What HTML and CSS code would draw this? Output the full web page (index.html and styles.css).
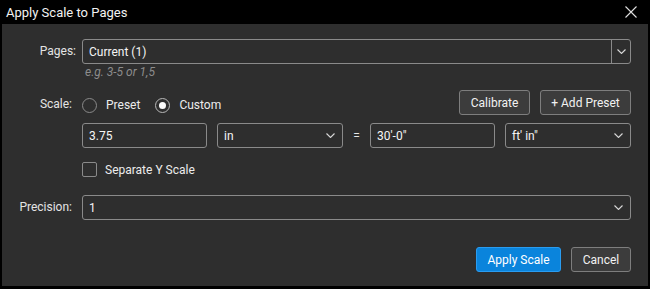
FILE: index.html
```html
<!DOCTYPE html>
<html>
<head>
<meta charset="utf-8">
<link rel="stylesheet" href="styles.css">
</head>
<body>
<div class="window">
  <div class="titlebar">
    <span class="title">Apply Scale to Pages</span>
    <svg class="close" width="12" height="12" viewBox="0 0 12 12"><path d="M0.5 0.5 L11.5 11.5 M11.5 0.5 L0.5 11.5" stroke="#e0e0e0" stroke-width="1.1" fill="none"/></svg>
  </div>
  <div class="panel">
    <div class="row row-pages">
      <div class="label">Pages:</div>
      <div class="control">
        <div class="field combo">
          <span class="value">Current (1)</span>
          <span class="combo-btn"><svg width="9" height="5" viewBox="0 0 9 5"><path d="M0.5 0.5 L4.5 4.5 L8.5 0.5" stroke="#d8d8d8" stroke-width="1.1" fill="none"/></svg></span>
        </div>
        <div class="hint">e.g. 3-5 or 1,5</div>
      </div>
    </div>

    <div class="row row-scale">
      <div class="label label-scale inset">Scale:</div>
      <div class="control scale-top">
        <div class="radios">
          <span class="radio"></span><span class="radio-text">Preset</span>
          <span class="radio checked"></span><span class="radio-text">Custom</span>
        </div>
        <div class="btns">
          <button class="btn calibrate">Calibrate</button>
          <button class="btn add">+ Add Preset</button>
        </div>
      </div>
    </div>

    <div class="row row-inputs">
      <div></div>
      <div class="control inputs">
        <div class="field"><span class="value">3.75</span></div>
        <div class="field select"><span class="value">in</span><svg width="9" height="5" viewBox="0 0 9 5"><path d="M0.5 0.5 L4.5 4.5 L8.5 0.5" stroke="#d8d8d8" stroke-width="1.1" fill="none"/></svg></div>
        <div class="eq">=</div>
        <div class="field"><span class="value">30'-0"</span></div>
        <div class="field select"><span class="value">ft' in"</span><svg width="9" height="5" viewBox="0 0 9 5"><path d="M0.5 0.5 L4.5 4.5 L8.5 0.5" stroke="#d8d8d8" stroke-width="1.1" fill="none"/></svg></div>
      </div>
    </div>

    <div class="row row-check">
      <div></div>
      <div class="control check">
        <span class="checkbox"></span><span class="check-text">Separate Y Scale</span>
      </div>
    </div>

    <div class="row row-precision">
      <div class="label inset">Precision:</div>
      <div class="control">
        <div class="field select"><span class="value">1</span><svg width="9" height="5" viewBox="0 0 9 5"><path d="M0.5 0.5 L4.5 4.5 L8.5 0.5" stroke="#d8d8d8" stroke-width="1.1" fill="none"/></svg></div>
      </div>
    </div>

    <div class="footer">
      <button class="btn primary">Apply Scale</button>
      <button class="btn cancel">Cancel</button>
    </div>
  </div>
</div>
</body>
</html>
```

FILE: styles.css
```css
* { box-sizing: border-box; }
html, body { margin: 0; padding: 0; background: #000; }
body {
  font-family: Roboto, "Liberation Sans", sans-serif;
  font-size: 12px;
  color: #ececec;
}
.window {
  width: 650px;
  height: 289px;
  background: #000;
  display: flex;
  flex-direction: column;
}
.titlebar {
  height: 24px;
  display: flex;
  align-items: center;
  justify-content: space-between;
  padding: 0 13px 0 6px;
}
.title {
  font-size: 13px;
  color: #f2f2f2;
}
.close { display: block; }
.panel {
  margin: 0 2px 3px 2px;
  height: 262px;
  background: #2e2e2e;
  padding: 15px 17px 0 17px;
}
.row {
  display: grid;
  grid-template-columns: 57px 1fr;
  column-gap: 6px;
}
.label {
  text-align: right;
  color: #e4e4e4;
  line-height: 25px;
  white-space: nowrap;
}
.label.inset { padding-right: 4px; }
.field {
  height: 25px;
  border: 1px solid #8a8a8a;
  border-radius: 3px;
  background: #2e2e2e;
  display: flex;
  align-items: center;
  padding: 0 6px;
  color: #f5f5f5;
  flex: 1;
  min-width: 0;
}
.field .value { flex: 1; white-space: nowrap; }
.combo { padding-right: 0; }
.combo-btn {
  width: 19px;
  height: 100%;
  border-left: 1px solid #8a8a8a;
  display: flex;
  align-items: center;
  justify-content: center;
}
.combo-btn svg, .select svg { display: block; }
.select { padding-right: 7px; }
.hint {
  color: #8c8c8c;
  font-style: italic;
  line-height: 14px;
  margin-top: 1px;
  padding-left: 3px;
}
.row-scale { margin-top: 11px; }
.label-scale { padding-top: 2px; }
.scale-top {
  display: flex;
  justify-content: space-between;
  align-items: flex-start;
}
.radios {
  display: flex;
  align-items: center;
  height: 14px;
  margin-top: 8px;
}
.radio {
  width: 15px;
  height: 15px;
  border: 1px solid #8a8a8a;
  border-radius: 50%;
  display: inline-flex;
  align-items: center;
  justify-content: center;
}
.radio.checked { border-color: #b8b8b8; }
.radio.checked::after {
  content: "";
  width: 7px;
  height: 7px;
  border-radius: 50%;
  background: #fafafa;
}
.radio-text { margin: 0 15px 0 9px; color: #ececec; }
.btns { display: flex; gap: 10px; }
.btn {
  height: 25px;
  border: 1px solid #7e7e7e;
  border-radius: 3px;
  background: #3c3c3c;
  color: #f2f2f2;
  font-family: Roboto, "Liberation Sans", sans-serif;
  font-size: 12px;
  padding: 0;
  margin: 0;
}
.calibrate { width: 71px; }
.add { width: 91px; }
.row-inputs { margin-top: 6px; }
.inputs { display: flex; align-items: center; gap: 10px; }
.eq { width: 7px; text-align: center; color: #e8e8e8; }
.row-check { margin-top: 14px; }
.check { display: flex; align-items: center; height: 15px; }
.checkbox {
  width: 15px;
  height: 15px;
  border: 1px solid #8a8a8a;
  border-radius: 2px;
}
.check-text { margin-left: 8px; }
.row-precision { margin-top: 18px; }
.row-precision .field { flex: none; }
.footer {
  margin-top: 27px;
  display: flex;
  justify-content: flex-end;
  gap: 10px;
}
.primary {
  background: #0a84dc;
  border-color: #2a9cf0;
  color: #fff;
  width: 85px;
}
.cancel { width: 60px; }
```
